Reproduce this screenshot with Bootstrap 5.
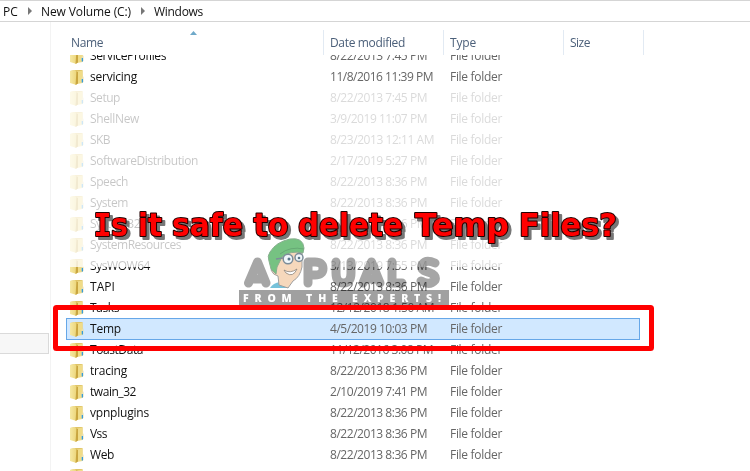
<!DOCTYPE html>
<html lang="en">
<head>
<meta charset="utf-8">
<title>Windows</title>
<meta name="viewport" content="width=device-width, initial-scale=1">
<link href="https://cdn.jsdelivr.net/npm/bootstrap@5.3.0/dist/css/bootstrap.min.css" rel="stylesheet">
<style>
body{width:750px;height:471px;font:12px/21px "Open Sans","Noto Sans",sans-serif;color:#111;background:#fff}
.explorer{width:750px;height:471px}
.pathbar{height:22px;border-top:1px solid #d5d5d5;border-bottom:1px solid #d5d5d5;padding-left:3px;line-height:19px}
.pathbar svg{flex:none}
.side{width:51px;border-right:1px solid #f3f3f3;padding-top:311px}
.side-sel{width:49px;height:21px;background:#f7f7f7;border:1px solid #dadada;border-left:0}
.files{width:699px}
.heads{height:33px;color:#4c607a;padding-left:14px}
.heads>div{border-right:1px solid #e2eaf3;padding:2px 0 0 6px;height:25px;margin-top:8px}
.c-name{width:259px}.c-date{width:120px}.c-type{width:120px}.c-size{width:80px}
.rows{height:416px}
.shift{margin-top:-9px}
.item{height:21px;margin-left:14px;width:575px;padding-left:5px;flex:none}
.item>div{padding-bottom:2px}
.item svg{width:15px;height:17px;flex:none;margin-right:5px}
.item .c-name{width:240px}
.item .c-date,.item .c-type{color:#666}
.item.chosen{outline:1px solid #66a7e8;background:#d1e8ff;height:20px;margin:0 0 1px 16px;width:572px;padding-left:3px}
.veil{left:60px;top:90px;width:590px;height:177px;background:rgba(255,255,255,.76)}
.stamp{mix-blend-mode:multiply}
</style>
</head>
<body class="overflow-hidden m-0">
<svg width="0" height="0" class="position-absolute"><defs>
<linearGradient id="fa"><stop offset="0" stop-color="#f6e9a4"/><stop offset="1" stop-color="#ecd67b"/></linearGradient>
<symbol id="folder" viewBox="0 0 15 17"><path d="M0 2L5 1H12.500V14H0Z" fill="#dfc468"/><path d="M7 2.500L12.500 1.500V14L7 15Z" fill="#f0dc88"/><path d="M0 2L5 1L6.500 3V16L5 15.500L0 14Z" fill="url(#fa)"/><path d="M6.500 2.500L8 3V14.500L5.500 16Z" fill="#c9a640"/><path d="M11.500 8.500L13.500 7.500V13L11.500 14Z" fill="#e8dfae"/><path d="M11.700 10H13V13.500H11.700Z" fill="#359bdc"/></symbol>
</defs></svg>
<main class="explorer position-relative overflow-hidden">
<nav class="pathbar d-flex align-items-center"><span class="fit" data-w="15">PC</span><svg class="ms-2 me-2" width="7" height="8"><path d="M2 0L6 4L2 8Z" fill="#777"/></svg><span class="fit" data-w="90">New Volume (C:)</span><svg class="ms-2 me-2" width="7" height="8"><path d="M2 0L6 4L2 8Z" fill="#777"/></svg><span class="fit" data-w="49">Windows</span></nav>
<div class="d-flex">
<aside class="side flex-shrink-0"><div class="side-sel"></div></aside>
<section class="files">
<div class="heads d-flex"><div class="c-name"><span class="fit" data-w="32">Name</span></div><div class="c-date"><span class="fit" data-w="75">Date modified</span></div><div class="c-type"><span class="fit" data-w="26">Type</span></div><div class="c-size"><span class="fit" data-w="20">Size</span></div></div>
<div class="rows overflow-hidden"><div class="shift d-flex flex-column" id="list"></div></div>
</section>
</div>
<div class="veil position-absolute"></div>
<svg class="stamp position-absolute top-0 start-0" width="750" height="471" viewBox="0 0 750 471">
<g fill="none" stroke="#a6a6a6" stroke-width="9" stroke-linecap="round" stroke-linejoin="round"><path d="M248.500 283L257.500 262L266 283M254 279H261"/><path d="M308 283V262H315Q323 262 323 268.500Q323 275 315 275H308"/><path d="M336 262V273Q336 283 343.500 283Q351 283 351 273V262"/><path d="M363 283L371.500 262L380 283M367 279H376"/><path d="M392 262V283H402"/><path d="M435 263Q426 259 422.500 264Q419 270 428 272Q437 275 435 280Q430 286 421 281"/></g>
<path d="M239 290H449V306H239Z" fill="#a0a0a0"/>
</svg>
<svg class="position-absolute top-0 start-0" width="750" height="471" viewBox="0 0 750 471">
<path d="M190 35L193.500 31L197 35Z" fill="#6fa9c9"/>
<g id="brand" opacity=".8">
<path d="M270 288Q273 283 280 282L289 288Z" fill="#55b3d2"/>
<path d="M274 262L271 270Q273 275 278 276L279 285L288 288L293 281Q300 277 302 267V252L281 251Z" fill="#f5cfac" stroke="#888" stroke-width="1"/>
<path d="M276 274L271 269L269 261Q267 256 270 252Q276 242 290 239Q303 237 304 248L303 253Q291 250 282 257L277 267Z" fill="#54b464" stroke="#6a9a72" stroke-width="1"/>
<path d="M280 254Q290 246 304 249" fill="none" stroke="#39864a" stroke-width=".7"/>
<g fill="#eef6fa" stroke="#5d7180" stroke-width="1.500"><circle cx="288" cy="259" r="4.800"/><circle cx="299" cy="257.500" r="4"/></g><circle cx="289" cy="259" r="1.500" fill="#31556b"/><circle cx="299" cy="258" r="1.300" fill="#31556b"/><path d="M276 259L283 258" stroke="#5d7180" stroke-width="1.500"/>
<path d="M284 270Q290 274 297 269Q293 278 286 273Z" fill="#fff" stroke="#716458" stroke-width=".8"/>
</g>
<text x="243" y="302" textLength="198" font-family="Open Sans" font-weight="800" font-size="10.500" fill="#fff">FROM THE EXPERTS!</text>
<defs><g id="title" font-family="DejaVu Sans Condensed, DejaVu Sans" font-weight="bold" font-size="32.500">
<text y="236"><tspan x="93.500" textLength="18" lengthAdjust="spacingAndGlyphs" font-family="DejaVu Sans Mono">I</tspan><tspan x="111" textLength="17" lengthAdjust="spacingAndGlyphs">s</tspan> <tspan x="138" textLength="24" lengthAdjust="spacingAndGlyphs">it</tspan> <tspan x="172" textLength="71" lengthAdjust="spacingAndGlyphs">safe</tspan> <tspan x="253.500" textLength="35" lengthAdjust="spacingAndGlyphs">to</tspan> <tspan x="298" textLength="105" lengthAdjust="spacingAndGlyphs">delete</tspan> <tspan x="415" textLength="94" lengthAdjust="spacingAndGlyphs">Temp</tspan> <tspan x="519" textLength="98" lengthAdjust="spacingAndGlyphs">Files?</tspan></text></g></defs>
<use href="#title" x="3" y="3" fill="#777" stroke="#777" stroke-width="2" stroke-linejoin="round"/>
<use href="#title" fill="#f00" stroke="#200" stroke-width="2" paint-order="stroke" stroke-linejoin="round"/>
<rect x="55.500" y="307.500" width="596" height="41" rx="1" fill="none" stroke="#f00" stroke-width="5"/>
</svg>
</main>
<script>
// name, name width, date, date width
const files=[["ServiceProfiles",76,"8/22/2013 7:45 PM",97],["servicing",47,"11/8/2016 11:39 PM",103],["Setup",30,"8/22/2013 7:45 PM",97],["ShellNew",49,"3/9/2019 11:07 PM",97],["SKB",20,"8/23/2013 12:11 AM",104],["SoftwareDistribution",108,"2/17/2019 5:27 PM",97],["Speech",38,"8/22/2013 8:36 PM",97],["System",38,"8/22/2013 8:36 PM",97],["System32",50,"8/22/2013 8:36 PM",97],["SystemResources",91,"8/22/2013 8:36 PM",97],["SysWOW64",60,"3/13/2019 7:55 PM",97],["TAPI",25,"8/22/2013 8:36 PM",97],["Tasks",29,"12/12/2018 1:50 AM",104],["Temp",31,"4/5/2019 10:03 PM",97],["ToastData",53,"11/12/2016 3:08 PM",103],["tracing",37,"8/22/2013 8:36 PM",97],["twain_32",46,"2/10/2019 7:41 PM",97],["vpnplugins",59,"8/22/2013 8:36 PM",97],["Vss",17,"8/22/2013 8:36 PM",97],["Web",24,"8/22/2013 8:36 PM",97],["",0,"",0]];
list.innerHTML=files.map(f=>`<div class="item d-flex align-items-center ${f[0]=="Temp"?"chosen":""}"><svg><use href="#folder"/></svg><div class="c-name"><span class="fit" data-w="${f[1]}">${f[0]}</span></div><div class="c-date"><span class="fit" data-w="${f[3]}">${f[2]}</span></div><div class="c-type"><span class="fit" data-w="${f[0]?52:0}">${f[0]?"File folder":""}</span></div></div>`).join("");
document.querySelectorAll(".fit").forEach(e=>{const n=e.textContent.length;if(n){const w=e.getBoundingClientRect().width;e.style.letterSpacing=(+e.dataset.w-w)/n+"px"}});
</script>
<script src="https://cdn.jsdelivr.net/npm/bootstrap@5.3.0/dist/js/bootstrap.bundle.min.js"></script>
</body>
</html>
